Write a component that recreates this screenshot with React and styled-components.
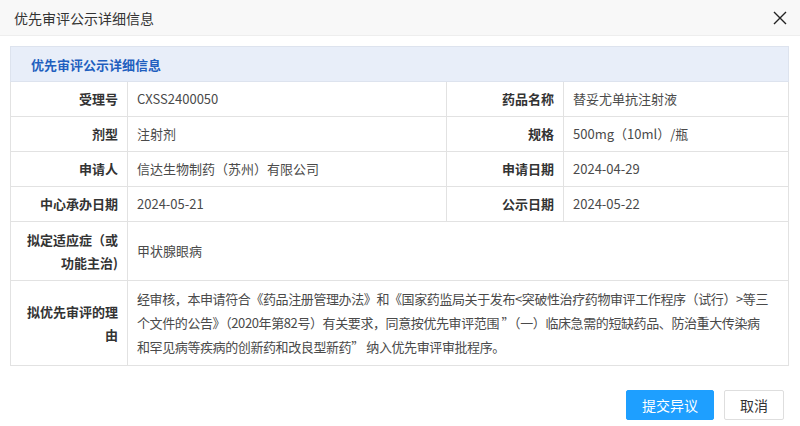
import React from "react";
import styled, { createGlobalStyle } from "styled-components";

const GlobalStyle = createGlobalStyle`
    html, body {
        margin: 0;
        padding: 0;
        background: #fff;
    }
    body {
        font-family: "Noto Sans CJK SC", "Noto Sans", sans-serif;
        color: #333;
    }
`;

const Dialog = styled.div`
    width: 800px;
    height: 426px;
    display: flex;
    flex-direction: column;
    background: #fff;
`;

const TitleBar = styled.div`
    height: 35px;
    display: flex;
    align-items: center;
    justify-content: space-between;
    padding: 0 12px 0 14px;
    background: #f8f8f8;
    border-bottom: 1px solid #eee;
    font-size: 14px;
    color: #333;
`;

const CloseButton = styled.button`
    border: none;
    background: transparent;
    padding: 0;
    width: 16px;
    height: 16px;
    display: flex;
    align-items: center;
    justify-content: center;
    cursor: pointer;
`;

const Body = styled.div`
    padding: 10px 11px 0 10px;
`;

const InfoTable = styled.table`
    width: 100%;
    border-collapse: collapse;
    table-layout: fixed;
    font-size: 13px;
    border: 1px solid #e2e2e2;
`;

const Caption = styled.th`
    height: 34px;
    padding: 0 20px;
    text-align: left;
    background: #e8eef9;
    color: #1f5fbf;
    font-weight: bold;
    border: 1px solid #dde3ee;
`;

const Label = styled.th`
    padding: 6px 9px;
    line-height: ${(p) => p.$lh || 22}px;
    text-align: right;
    font-weight: 600;
    color: #333;
    border: 1px solid #e2e2e2;
    vertical-align: middle;
`;

const Value = styled.td`
    padding: 6px 9px;
    line-height: ${(p) => p.$lh || 22}px;
    letter-spacing: ${(p) => p.$ls || 0}px;
    text-align: left;
    color: #4a4a4a;
    border: 1px solid #e2e2e2;
    vertical-align: middle;
`;

const Footer = styled.div`
    display: flex;
    justify-content: flex-end;
    gap: 10px;
    padding: 24px 16px 0 0;
`;

const Button = styled.button`
    height: 30px;
    padding: 0 15px;
    font-family: inherit;
    font-size: 14px;
    border-radius: 2px;
    border: 1px solid ${(p) => (p.$primary ? "#1e9fff" : "#dedede")};
    background: ${(p) => (p.$primary ? "#1e9fff" : "#fff")};
    color: ${(p) => (p.$primary ? "#fff" : "#333")};
    cursor: pointer;
`;

const rows = [
    ["受理号", "CXSS2400050", "药品名称", "替妥尤单抗注射液"],
    ["剂型", "注射剂", "规格", "500mg（10ml）/瓶"],
    ["申请人", "信达生物制药（苏州）有限公司", "申请日期", "2024-04-29"],
    ["中心承办日期", "2024-05-21", "公示日期", "2024-05-22"],
];

const reasonHead =
    "经审核，本申请符合《药品注册管理办法》和《国家药监局关于发布<突破性治疗药物审评工作程序（试行）>等三个文件的公告》（2020年第82号）有关要求，同意按优先审评范围 ”（一）临床急需的短缺药品、防治重大传染病";
const reasonTail = "和罕见病等疾病的创新药和改良型新药” 纳入优先审评审批程序。";

const App = () => {
    return (
        <Dialog>
            <GlobalStyle />
            <TitleBar>
                <span>优先审评公示详细信息</span>
                <CloseButton aria-label="关闭">
                    <svg width="14" height="14" viewBox="0 0 14 14">
                        <path d="M1 1 L13 13 M13 1 L1 13" stroke="#222" strokeWidth="1.4" />
                    </svg>
                </CloseButton>
            </TitleBar>
            <Body>
                <InfoTable>
                    <colgroup>
                        <col style={{ width: 117 }} />
                        <col style={{ width: 319 }} />
                        <col style={{ width: 117 }} />
                        <col />
                    </colgroup>
                    <thead>
                        <tr>
                            <Caption colSpan={4}>优先审评公示详细信息</Caption>
                        </tr>
                    </thead>
                    <tbody>
                        {rows.map((r) => (
                            <tr key={r[0]}>
                                <Label>{r[0]}</Label>
                                <Value>{r[1]}</Value>
                                <Label>{r[2]}</Label>
                                <Value>{r[3]}</Value>
                            </tr>
                        ))}
                        <tr>
                            <Label $lh={23}>拟定适应症（或功能主治)</Label>
                            <Value colSpan={3}>甲状腺眼病</Value>
                        </tr>
                        <tr>
                            <Label $lh={23}>拟优先审评的理由</Label>
                            <Value colSpan={3} $lh={24} $ls={-0.4}>
                                {reasonHead}
                                <br />
                                {reasonTail}
                            </Value>
                        </tr>
                    </tbody>
                </InfoTable>
            </Body>
            <Footer>
                <Button $primary>提交异议</Button>
                <Button>取消</Button>
            </Footer>
        </Dialog>
    );
};

export default App;
